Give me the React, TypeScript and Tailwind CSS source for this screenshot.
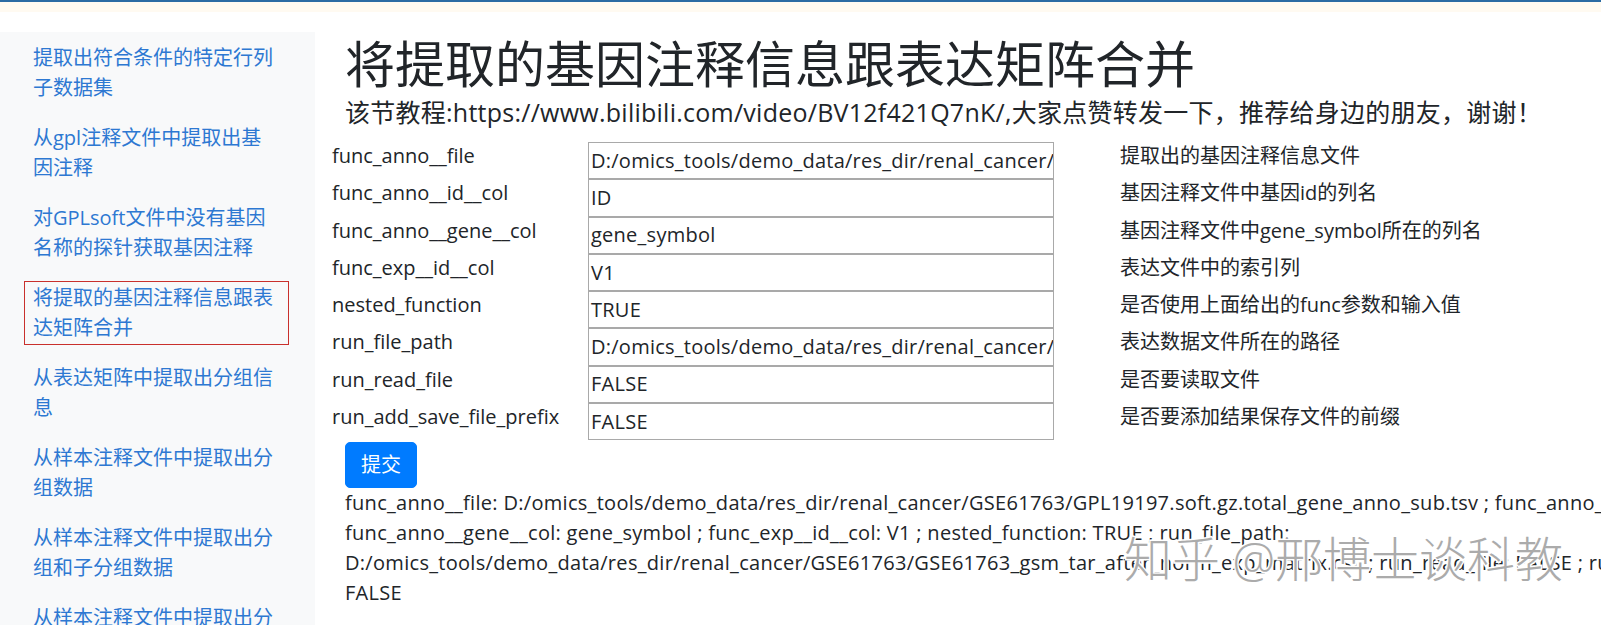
import React from 'react';

const navItems: { lines: string[]; active?: boolean }[] = [
  { lines: ['提取出符合条件的特定行列', '子数据集'] },
  { lines: ['从gpl注释文件中提取出基', '因注释'] },
  { lines: ['对GPLsoft文件中没有基因', '名称的探针获取基因注释'] },
  { lines: ['将提取的基因注释信息跟表', '达矩阵合并'], active: true },
  { lines: ['从表达矩阵中提取出分组信', '息'] },
  { lines: ['从样本注释文件中提取出分', '组数据'] },
  { lines: ['从样本注释文件中提取出分', '组和子分组数据'] },
  { lines: ['从样本注释文件中提取出分', '组和子分组的数据'] },
];

const params = [
  { name: 'func_anno__file', value: 'D:/omics_tools/demo_data/res_dir/renal_cancer/GSE61763/GPL19197.soft.gz.total_gene_anno_sub.tsv', desc: '提取出的基因注释信息文件' },
  { name: 'func_anno__id__col', value: 'ID', desc: '基因注释文件中基因id的列名' },
  { name: 'func_anno__gene__col', value: 'gene_symbol', desc: '基因注释文件中gene_symbol所在的列名' },
  { name: 'func_exp__id__col', value: 'V1', desc: '表达文件中的索引列' },
  { name: 'nested_function', value: 'TRUE', desc: '是否使用上面给出的func参数和输入值' },
  { name: 'run_file_path', value: 'D:/omics_tools/demo_data/res_dir/renal_cancer/GSE61763/GSE61763_gsm_tar_after_norm_exp_matrix.csv', desc: '表达数据文件所在的路径' },
  { name: 'run_read_file', value: 'FALSE', desc: '是否要读取文件' },
  { name: 'run_add_save_file_prefix', value: 'FALSE', desc: '是否要添加结果保存文件的前缀' },
];

const resultLines = [
  'func_anno__file: D:/omics_tools/demo_data/res_dir/renal_cancer/GSE61763/GPL19197.soft.gz.total_gene_anno_sub.tsv ; func_anno__id__col: ID ;',
  'func_anno__gene__col: gene_symbol ; func_exp__id__col: V1 ; nested_function: TRUE ; run_file_path:',
  'D:/omics_tools/demo_data/res_dir/renal_cancer/GSE61763/GSE61763_gsm_tar_after_norm_exp_matrix.csv ; run_read_file: FALSE ; run_add_save_file_prefix:',
  'FALSE',
];

export default function App() {
  return (
    <div className="relative h-[625px] w-full overflow-hidden bg-white font-['Open_Sans','Noto_Sans_CJK_SC',sans-serif] text-[#212529]">
      <div className="h-[2px] bg-[#2b6ba3]" />
      <div className="h-[10px] bg-[#fffaf1]" />
      <div className="h-[20px]" />

      <div className="flex">
        {/* sidebar */}
        <aside className="min-h-[600px] w-[315px] shrink-0 bg-[#f8f9fa] pt-[9px] pl-[24px] pr-[26px]">
          {navItems.map((item, i) => (
            <div
              key={i}
              className={`mb-[16px] border px-[8px] py-[1px] text-[20px] leading-[30px] text-[#2d78d2] ${
                item.active ? 'border-[#c9302c]' : 'border-transparent'
              }`}
            >
              {item.lines.map((l, j) => (
                <div key={j} className="whitespace-nowrap">
                  {l}
                </div>
              ))}
            </div>
          ))}
        </aside>

        {/* main */}
        <main className="min-w-0 flex-1 pl-[30px]">
          <h1 className="mt-[2px] whitespace-nowrap text-[50px] leading-[60px] font-normal">
            将提取的基因注释信息跟表达矩阵合并
          </h1>
          <p className="mt-[3px] whitespace-nowrap text-[25px] leading-[30px] tracking-[0.25px]">
            该节教程:https://www.bilibili.com/video/BV12f421Q7nK/,大家点赞转发一下，推荐给身边的朋友，谢谢！
          </p>

          <div className="ml-[-13px] mt-[15px]">
            {params.map((p) => (
              <div key={p.name} className="flex h-[37.3px] items-start">
                <div className="w-[256px] shrink-0 whitespace-nowrap text-[20px] leading-[30px] -mt-[1px]">{p.name}</div>
                <div className="flex h-full w-[466px] shrink-0 items-center overflow-hidden whitespace-nowrap border border-[#a9a9a9] px-[2px] text-[20px] tracking-[0.25px]">
                  {p.value}
                </div>
                <div className="ml-[66px] -mt-[1px] whitespace-nowrap text-[20px] leading-[30px]">{p.desc}</div>
              </div>
            ))}
          </div>

          <button className="mt-[2px] rounded-[5px] border border-[#007bff] bg-[#007bff] px-[15px] py-[7px] text-[20px] leading-[30px] text-white">
            提交
          </button>

          <div className="text-[20px] leading-[30px] tracking-[0.3px]">
            {resultLines.map((l, i) => (
              <div key={i} className="whitespace-nowrap">
                {l}
              </div>
            ))}
          </div>
        </main>
      </div>

      {/* watermark */}
      <div className="pointer-events-none absolute left-[1124px] top-[531px] whitespace-nowrap text-[48px] leading-[56px] font-light text-[#ababab] [-webkit-text-stroke:3px_white] [paint-order:stroke_fill]">
        知乎 @邢博士谈科教
      </div>
    </div>
  );
}
